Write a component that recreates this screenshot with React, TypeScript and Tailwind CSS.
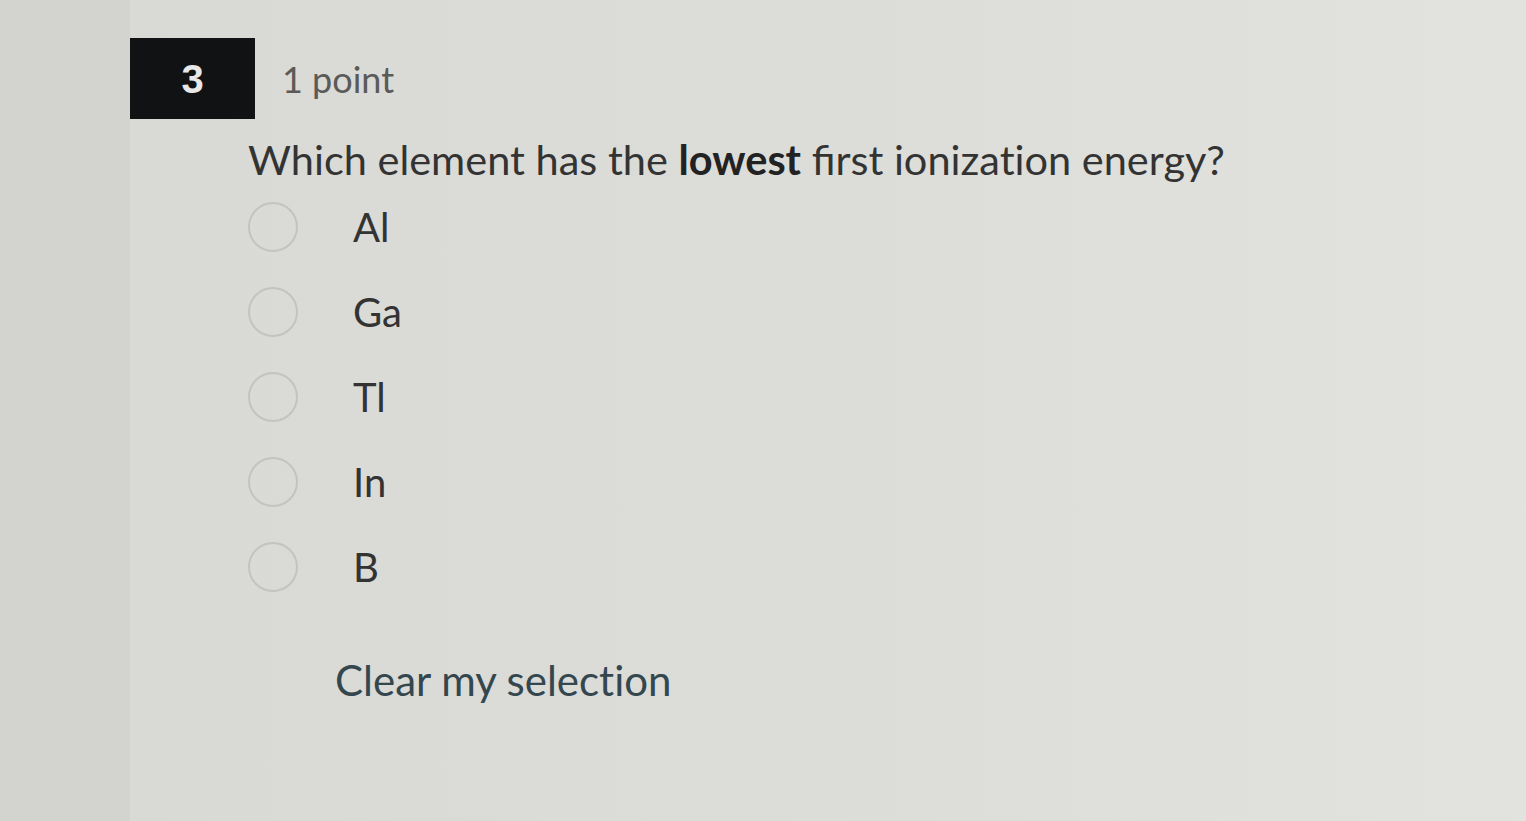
import { useState } from "react";

const options = ["Al", "Ga", "Tl", "In", "B"];

const App = () => {
  const [selected, setSelected] = useState<string | null>(null);

  return (
    <div className="flex h-[821px] w-full overflow-hidden bg-[#dcdcd8] font-['Lato','Liberation_Sans',sans-serif]">
      <div className="w-[130px] shrink-0 bg-[#d3d4d0]" />
      <div className="flex-1 bg-gradient-to-r from-[#d9d9d5] via-[#dcdcd8] to-[#e2e2de] pt-[38px]">
        <div className="flex items-center">
          <div className="flex h-[81px] w-[125px] items-center justify-center bg-[#111214]">
            <span className="font-['Liberation_Sans',sans-serif] text-[40px] font-bold text-[#e8e8e8]">3</span>
          </div>
          <span className="ml-[27px] text-[36px] text-[#5a5a58]">1 point</span>
        </div>

        <div className="ml-[118px] mt-[12px]">
          <p className="text-[41.5px] leading-[56px] text-[#333333]">
            Which element has the <span className="font-bold text-[#222222]">lowest</span> first{" "}
            <span className="[font-feature-settings:'liga'_0,'clig'_0,'calt'_0,'dlig'_0]">ionization</span> energy?
          </p>

          <div className="-mt-[3px] flex flex-col">
            {options.map((opt) => (
              <button
                key={opt}
                onClick={() => setSelected(opt)}
                className="flex h-[85px] items-center text-left"
              >
                <span className="flex h-[50px] w-[50px] items-center justify-center rounded-full border-2 border-[#c3c3bf]">
                  {selected === opt && <span className="h-[24px] w-[24px] rounded-full bg-[#35474f]" />}
                </span>
                <span className="ml-[55px] text-[40px] text-[#333333]">{opt}</span>
              </button>
            ))}
          </div>

          <button
            onClick={() => setSelected(null)}
            className="ml-[87px] mt-[40px] text-[42px] text-[#34474f] [font-feature-settings:'liga'_0,'clig'_0,'calt'_0,'dlig'_0]"
          >
            Clear my selection
          </button>
        </div>
      </div>
    </div>
  );
};

export default App;
